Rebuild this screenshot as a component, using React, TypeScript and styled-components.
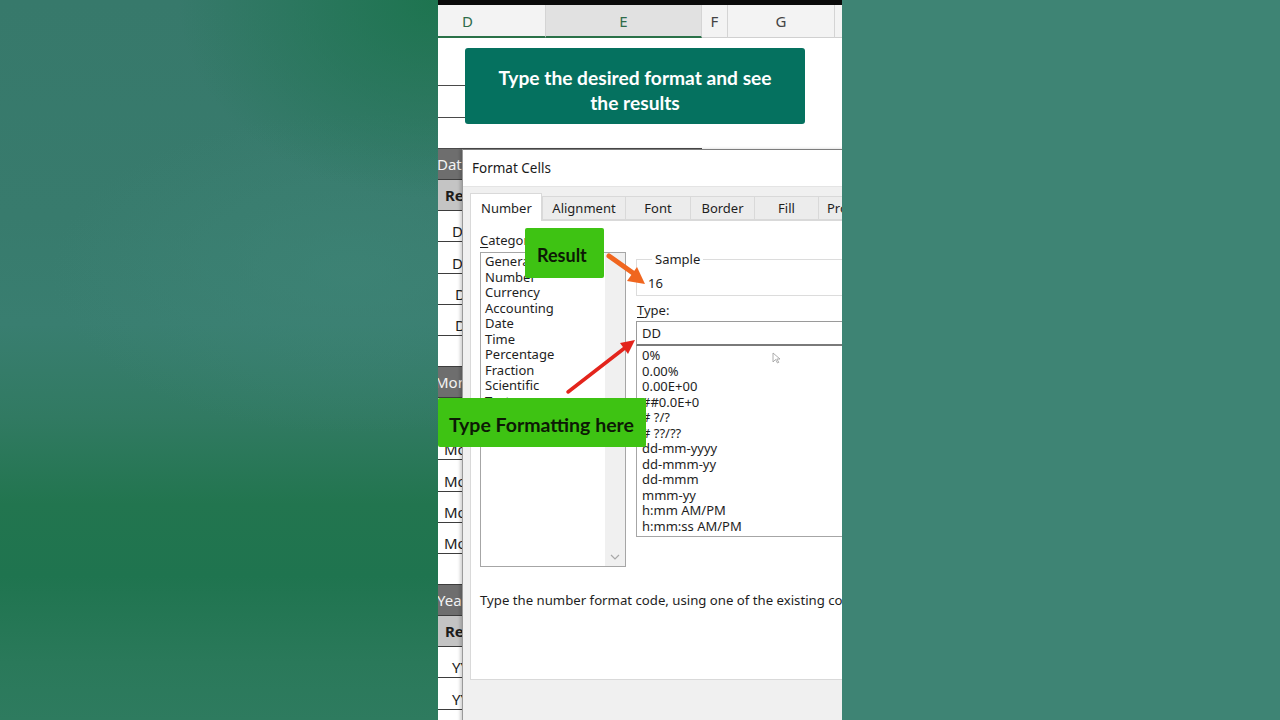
import React from "react";
import styled, { createGlobalStyle } from "styled-components";

const GlobalStyle = createGlobalStyle`
  html, body {
    margin: 0;
    padding: 0;
    width: 1280px;
    height: 720px;
    overflow: hidden;
  }
  body {
    font-family: "Noto Sans", "Liberation Sans", sans-serif;
    color: #1e1e1e;
  }
  * { box-sizing: border-box; }
`;

const Page = styled.div`
  display: flex;
  width: 1280px;
  height: 720px;
`;

const LeftBackdrop = styled.div`
  flex: 0 0 438px;
  background:
    radial-gradient(ellipse 260px 200px at 100% 0%, rgba(28, 116, 78, 0.95), rgba(28, 116, 78, 0) 100%),
    radial-gradient(ellipse 300px 160px at 80% 38%, rgba(62, 132, 118, 0.7), rgba(62, 132, 118, 0) 100%),
    linear-gradient(to bottom, #37796b 0%, #387b6d 30%, #397e70 45%, #317a62 58%, #22754f 70%, #1f744f 80%, #2a795a 92%, #2e7b5f 100%);
`;

const RightBackdrop = styled.div`
  flex: 1;
  background: #3e8474;
`;

const Frame = styled.div`
  flex: 0 0 404px;
  position: relative;
  overflow: hidden;
  background: #ffffff;
  display: flex;
  flex-direction: column;
`;

const TopStrip = styled.div`
  height: 5px;
  background: #0a0a0a;
  flex: 0 0 auto;
`;

const ColumnHeaderRow = styled.div`
  display: flex;
  height: 33px;
  flex: 0 0 auto;
  background: #f3f3f3;
`;

const ColumnHeader = styled.div<{ $w: number; $selected?: boolean; $active?: boolean; $shift?: number }>`
  flex: 0 0 ${(p) => p.$w}px;
  display: flex;
  align-items: center;
  justify-content: center;
  padding-right: ${(p) => p.$shift ?? 0}px;
  font-size: 15px;
  color: ${(p) => (p.$selected ? "#2e6b4a" : "#444")};
  background: ${(p) => (p.$active ? "#e1e1e1" : "#f3f3f3")};
  border-right: 1px solid #d4d4d4;
  border-bottom: ${(p) => (p.$selected ? "2px solid #2a7148" : "1px solid #d0d0d0")};
`;

const SheetArea = styled.div`
  display: flex;
  flex-direction: column;
  flex: 1;
`;

const SpacerRow = styled.div<{ $h: number; $line?: boolean }>`
  flex: 0 0 ${(p) => p.$h}px;
  width: 264px;
  border-bottom: ${(p) => (p.$line ? "1px solid #4a4a4a" : "none")};
`;

type RowKind = "dark" | "gray" | "data" | "empty";

const TableRow = styled.div<{ $kind: RowKind; $indent: number }>`
  flex: 0 0 31.15px;
  width: 264px;
  display: flex;
  align-items: ${(p) => (p.$kind === "data" ? "flex-end" : "center")};
  padding-bottom: 0;
  text-indent: ${(p) => p.$indent}px;
  font-size: 15px;
  line-height: 20px;
  white-space: nowrap;
  border-bottom: 1px solid #3d3d3d;
  background: ${(p) => (p.$kind === "dark" ? "#6e6e6e" : p.$kind === "gray" ? "#c4c4c4" : "#ffffff")};
  color: ${(p) => (p.$kind === "dark" ? "#f4f4f4" : "#1c1c1c")};
  font-weight: ${(p) => (p.$kind === "gray" ? 700 : 400)};
`;

const Banner = styled.div`
  position: absolute;
  left: 27px;
  top: 48px;
  width: 340px;
  height: 76px;
  background: #05715f;
  border-radius: 3px;
  display: flex;
  align-items: center;
  justify-content: center;
  padding-top: 7px;
  text-align: center;
  color: #ffffff;
  font-family: Lato, "Open Sans", sans-serif;
  font-weight: 700;
  font-size: 19.2px;
  line-height: 25px;
`;

const DialogWindow = styled.div`
  position: absolute;
  left: 24px;
  top: 149px;
  width: 440px;
  height: 600px;
  background: #f0f0f0;
  border-left: 1px solid #9a9a9a;
  border-top: 1px solid #7d7d7d;
  box-shadow: -2px 0 3px rgba(0, 0, 0, 0.18);
  display: flex;
  flex-direction: column;
`;

const TitleBar = styled.div`
  flex: 0 0 37px;
  background: #ffffff;
  display: flex;
  align-items: center;
  padding-left: 9px;
  font-size: 13.5px;
  color: #1a1a1a;
  border-bottom: 1px solid #e4e4e4;
`;

const DialogBody = styled.div`
  flex: 1;
  padding: 6px 0 0 7px;
  display: flex;
  flex-direction: column;
`;

const TabRow = styled.div`
  display: flex;
  align-items: flex-end;
  height: 27px;
`;

const Tab = styled.div<{ $w: number; $selected?: boolean }>`
  flex: 0 0 ${(p) => p.$w}px;
  height: ${(p) => (p.$selected ? "28px" : "24px")};
  margin-bottom: ${(p) => (p.$selected ? "-1px" : "0")};
  position: relative;
  z-index: ${(p) => (p.$selected ? 2 : 1)};
  display: flex;
  align-items: center;
  justify-content: ${(p) => (p.$selected ? "flex-start" : "center")};
  padding-left: ${(p) => (p.$selected ? "10px" : "0")};
  padding-top: ${(p) => (p.$selected ? "1px" : "0")};
  font-size: 13px;
  color: #1e1e1e;
  white-space: nowrap;
  overflow: hidden;
  background: ${(p) => (p.$selected ? "#ffffff" : "#ececec")};
  border: 1px solid #d9d9d9;
  border-bottom: ${(p) => (p.$selected ? "none" : "1px solid #d9d9d9")};
  border-right: ${(p) => (p.$selected ? "1px solid #d9d9d9" : "none")};
`;

const TabPanel = styled.div`
  height: 460px;
  background: #ffffff;
  border: 1px solid #d9d9d9;
  padding: 0 0 0 9px;
  display: flex;
  flex-direction: column;
`;

const PanelColumns = styled.div`
  display: flex;
  gap: 10px;
  height: 346px;
`;

const CategoryColumn = styled.div`
  flex: 0 0 146px;
  display: flex;
  flex-direction: column;
  padding-top: 11px;
`;

const FieldLabel = styled.div`
  font-size: 13px;
  line-height: 16px;
  height: 16px;
  color: #1e1e1e;
`;

const AccessKey = styled.span`
  text-decoration: underline;
  text-underline-offset: 2px;
`;

const CategoryList = styled.div`
  margin-top: 4px;
  height: 315px;
  border: 1px solid #a6a6a6;
  display: flex;
`;

const ListItems = styled.div`
  flex: 1;
  padding: 1px 0 0 4px;
  font-size: 13px;
  line-height: 15.5px;
  overflow: hidden;
  white-space: nowrap;
`;

const ScrollTrack = styled.div`
  flex: 0 0 20px;
  background: #f0f0f0;
  display: flex;
  flex-direction: column;
  justify-content: flex-end;
  align-items: center;
  padding-bottom: 6px;
`;

const RightColumn = styled.div`
  flex: 1;
  display: flex;
  flex-direction: column;
  padding-top: 30px;
`;

const SampleBox = styled.fieldset`
  margin: 0;
  height: 45px;
  padding: 0 0 0 11px;
  border: 1px solid #dcdcdc;
  border-right: none;
  font-size: 13px;
  line-height: 16px;
`;

const SampleLegend = styled.legend`
  padding: 0 3px;
  margin-left: 4px;
  font-size: 13px;
  line-height: 16px;
`;

const SampleValue = styled.div`
  padding-top: 8px;
`;

const TypeLabelRow = styled(FieldLabel)`
  margin-top: 6px;
  padding-left: 1px;
`;

const TypeInput = styled.div`
  margin-top: 3px;
  height: 25px;
  border: 1px solid #9a9a9a;
  border-right: none;
  border-bottom: 2px solid #7a7a7a;
  display: flex;
  align-items: center;
  padding-left: 5px;
  font-size: 13px;
`;

const FormatList = styled.div`
  height: 191px;
  border: 1px solid #a6a6a6;
  border-top: none;
  border-right: none;
  padding: 2px 0 0 5px;
  font-size: 13px;
  line-height: 15.5px;
  white-space: nowrap;
`;

const Description = styled.div`
  margin-top: 24px;
  font-size: 13.2px;
  white-space: nowrap;
  color: #1e1e1e;
`;

const Callout = styled.div<{ $left: number; $top: number; $w: number; $h: number; $size: number; $pad: number }>`
  position: absolute;
  left: ${(p) => p.$left}px;
  top: ${(p) => p.$top}px;
  width: ${(p) => p.$w}px;
  height: ${(p) => p.$h}px;
  background: #3ec313;
  display: flex;
  align-items: center;
  padding-left: ${(p) => p.$pad}px;
  padding-top: 4px;
  color: #0c1a05;
  font-family: Lato, "Open Sans", sans-serif;
  font-weight: 700;
  font-size: ${(p) => p.$size}px;
  white-space: nowrap;
  border-radius: 2px;
`;

const Overlay = styled.svg`
  position: absolute;
  left: 0;
  top: 0;
  width: 404px;
  height: 720px;
  pointer-events: none;
`;

const tableRows: { kind: RowKind; text: string; indent: number }[] = [
  { kind: "dark", text: "Date", indent: -1 },
  { kind: "gray", text: "Result", indent: 7 },
  { kind: "data", text: "DD", indent: 14 },
  { kind: "data", text: "DD", indent: 14 },
  { kind: "data", text: "DD", indent: 17 },
  { kind: "data", text: "DD", indent: 17 },
  { kind: "empty", text: "", indent: 0 },
  { kind: "dark", text: "Month", indent: -3 },
  { kind: "gray", text: "Result", indent: 7 },
  { kind: "data", text: "Mon", indent: 6 },
  { kind: "data", text: "Mon", indent: 6 },
  { kind: "data", text: "Mon", indent: 6 },
  { kind: "data", text: "Mon", indent: 6 },
  { kind: "empty", text: "", indent: 0 },
  { kind: "dark", text: "Year", indent: -1 },
  { kind: "gray", text: "Result", indent: 7 },
  { kind: "data", text: "YY", indent: 14 },
  { kind: "data", text: "YY", indent: 14 },
  { kind: "data", text: "", indent: 14 },
];

const categories = [
  "General",
  "Number",
  "Currency",
  "Accounting",
  "Date",
  "Time",
  "Percentage",
  "Fraction",
  "Scientific",
  "Text",
  "Special",
  "Custom",
];

const formats = [
  "0%",
  "0.00%",
  "0.00E+00",
  "##0.0E+0",
  "# ?/?",
  "# ??/??",
  "dd-mm-yyyy",
  "dd-mmm-yy",
  "dd-mmm",
  "mmm-yy",
  "h:mm AM/PM",
  "h:mm:ss AM/PM",
];

const tabs: { label: string; w: number; selected?: boolean }[] = [
  { label: "Number", w: 72, selected: true },
  { label: "Alignment", w: 83 },
  { label: "Font", w: 65 },
  { label: "Border", w: 64 },
  { label: "Fill", w: 64 },
  { label: "Protection", w: 80 },
];

export default function App() {
  return (
    <>
      <GlobalStyle />
      <Page>
        <LeftBackdrop />
        <Frame>
          <TopStrip />
          <ColumnHeaderRow>
            <ColumnHeader $w={108} $selected $shift={48}>D</ColumnHeader>
            <ColumnHeader $w={156} $selected $active>E</ColumnHeader>
            <ColumnHeader $w={26}>F</ColumnHeader>
            <ColumnHeader $w={107}>G</ColumnHeader>
            <ColumnHeader $w={20}></ColumnHeader>
          </ColumnHeaderRow>
          <SheetArea>
            <SpacerRow $h={48} $line />
            <SpacerRow $h={32} $line />
            <SpacerRow $h={31} $line />
            {tableRows.map((r, i) => (
              <TableRow key={i} $kind={r.kind} $indent={r.indent}>
                {r.text}
              </TableRow>
            ))}
          </SheetArea>

          <Banner>
            Type the desired format and see
            <br />
            the results
          </Banner>

          <DialogWindow>
            <TitleBar>Format Cells</TitleBar>
            <DialogBody>
              <TabRow>
                {tabs.map((t) => (
                  <Tab key={t.label} $w={t.w} $selected={t.selected}>
                    {t.label}
                  </Tab>
                ))}
              </TabRow>
              <TabPanel>
                <PanelColumns>
                  <CategoryColumn>
                    <FieldLabel>
                      <AccessKey>C</AccessKey>ategory:
                    </FieldLabel>
                    <CategoryList>
                      <ListItems>
                        {categories.map((c) => (
                          <div key={c}>{c}</div>
                        ))}
                      </ListItems>
                      <ScrollTrack>
                        <svg width="10" height="6" viewBox="0 0 10 6">
                          <path d="M1 1 L5 5 L9 1" fill="none" stroke="#a8a8a8" strokeWidth="1.2" />
                        </svg>
                      </ScrollTrack>
                    </CategoryList>
                  </CategoryColumn>
                  <RightColumn>
                    <SampleBox>
                      <SampleLegend>Sample</SampleLegend>
                      <SampleValue>16</SampleValue>
                    </SampleBox>
                    <TypeLabelRow>
                      <AccessKey>T</AccessKey>ype:
                    </TypeLabelRow>
                    <TypeInput>DD</TypeInput>
                    <FormatList>
                      {formats.map((f) => (
                        <div key={f}>{f}</div>
                      ))}
                    </FormatList>
                  </RightColumn>
                </PanelColumns>
                <Description>
                  Type the number format code, using one of the existing codes as a starting point.
                </Description>
              </TabPanel>
            </DialogBody>
          </DialogWindow>

          <Callout $left={87} $top={228} $w={79} $h={50} $size={18} $pad={12}>
            Result
          </Callout>
          <Callout $left={0} $top={398} $w={208} $h={49} $size={19.5} $pad={11}>
            Type Formatting here
          </Callout>

          <Overlay viewBox="0 0 404 720">
            <line x1="171" y1="256" x2="195" y2="273" stroke="#f0661f" strokeWidth="5" strokeLinecap="round" />
            <polygon points="207,284 189,281 199,267" fill="#f0661f" />
            <line x1="130" y1="392" x2="188" y2="347" stroke="#e3241c" strokeWidth="3.5" strokeLinecap="round" />
            <polygon points="197,340 190,354 182,343" fill="#e3241c" />
            <path
              d="M335 353 L335 362 L337.5 359.5 L339.5 363 L340.8 362.3 L338.8 359 L342 359 Z"
              fill="#ffffff"
              stroke="#9a9a9a"
              strokeWidth="0.8"
            />
          </Overlay>
        </Frame>
        <RightBackdrop />
      </Page>
    </>
  );
}
